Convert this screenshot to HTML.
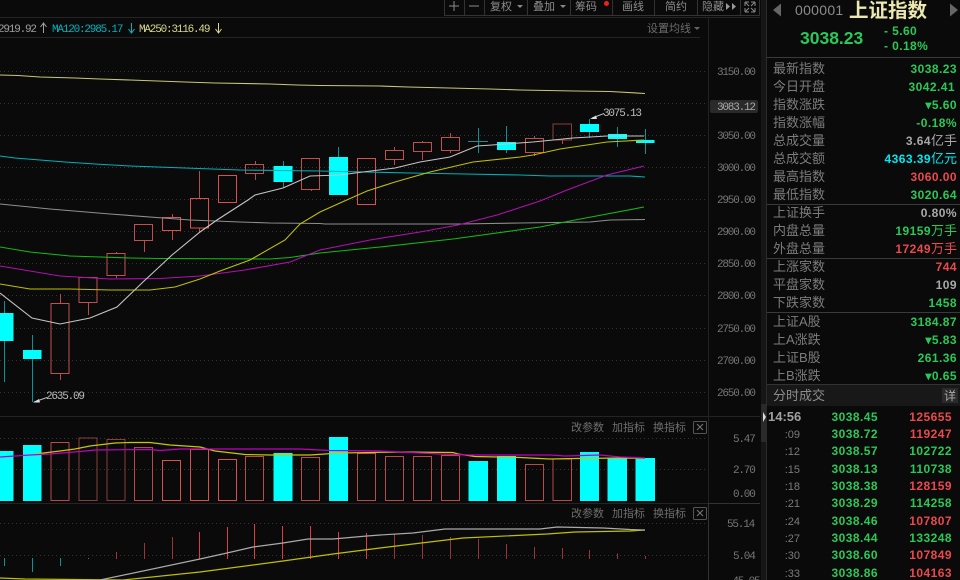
<!DOCTYPE html>
<html><head><meta charset="utf-8"><style>
html,body{margin:0;padding:0;background:#0a0a0a;width:960px;height:580px;overflow:hidden}
svg{display:block}
text{font-family:"Liberation Sans","Noto Sans CJK SC",sans-serif}
.ax{font-family:"Liberation Mono",monospace;font-size:11px;letter-spacing:-1.2px;fill:#767676}
.l{font-size:13px;fill:#7c7c7c}
.v{font-size:12px;font-weight:bold;text-anchor:end;letter-spacing:.45px}
.u{font-size:13px;font-weight:normal;letter-spacing:0}
.g{fill:#2bc858}.r{fill:#e84a4e}.w{fill:#a8a8a8}.c{fill:#00e8f0}
.t{font-size:11px;fill:#7a7a7a;text-anchor:end}
.tb{font-size:11px;fill:#8c8c8c;text-anchor:middle}
.m{font-family:"Liberation Mono",monospace;font-size:11px;letter-spacing:-1.2px}
.ctl{font-size:11px;fill:#6e6e6e}
</style></head><body>
<svg width="960" height="580" viewBox="0 0 960 580" xmlns="http://www.w3.org/2000/svg">
<rect width="960" height="580" fill="#0a0a0a"/>
<!-- frame lines -->
<path d="M0 17.5H760M0 37.5H700M0 416.5H760M0 503.5H760" stroke="#242424" fill="none"/>
<path d="M708.5 17V580" stroke="#222" fill="none"/>
<rect x="761" y="0" width="5" height="580" fill="#161616"/>
<path d="M766.5 0V580" stroke="#2c2c2c"/>
<path d="M708 503.5H760M708.5 503V580" stroke="#333" fill="none"/>
<!-- grid -->
<path d="M0 71.5H706M0 103.5H706M0 135.5H706M0 167.5H706M0 199.5H706M0 231.5H706M0 263.5H706M0 295.5H706M0 328.5H706M0 360.5H706M0 392.5H706M0 438.5H706M0 469.5H706M0 523.5H706M0 555.5H706" stroke="#333" stroke-dasharray="1 3" fill="none"/>
<!-- toolbar -->
<path d="M444.500 0V15.500H759.500V0M464.500 0V15M484.500 0V15M527.500 0V15M570.500 0V15M612.500 0V15M654.500 0V15M697.500 0V15M740.500 0V15" stroke="#333" fill="none"/>
<path d="M449 6H459M454 1V11M469 6H479" stroke="#8a8a8a" fill="none"/>
<text class="tb" x="501" y="10">复权</text><path d="M517 5h6l-3 3z" fill="#888"/>
<text class="tb" x="544" y="10">叠加</text><path d="M560 5h6l-3 3z" fill="#888"/>
<text class="tb" x="586" y="10">筹码</text><circle cx="606.500" cy="3.500" r="2.500" fill="#ee2020"/>
<text class="tb" x="633" y="10">画线</text>
<text class="tb" x="676" y="10">简约</text>
<text class="tb" x="713" y="10">隐藏</text><path d="M726 3l4 3.500-4 3.500zM732 3l4 3.500-4 3.500z" fill="#999"/>
<path d="M745 2l4 0M745 2l0 4M745 2l4 4M755 2l-4 0M755 2l0 4M755 2l-4 4M745 12l4 0M745 12l0-4M745 12l4-4M755 12l-4 0M755 12l0-4M755 12l-4-4" stroke="#888" fill="none"/>
<!-- MA legend -->
<text class="m" x="-2" y="32" fill="#a0a0a0">2919.92</text>
<path d="M43.500 33V24M40.500 27l3-4 3 4" stroke="#a0a0a0" fill="none"/>
<text class="m" x="52" y="32" fill="#00b4c0">MA120:2985.17</text>
<path d="M131.500 23V32M128.500 29l3 4 3-4" stroke="#00b4c0" fill="none"/>
<text class="m" x="139" y="32" fill="#d8d890">MA250:3116.49</text>
<path d="M218.500 23V32M215.500 29l3 4 3-4" stroke="#d8d890" fill="none"/>
<text x="647" y="32" font-size="11" fill="#6c6c6c">设置均线</text><path d="M694 27h6l-3 3z" fill="#666"/>
<!-- axis labels -->
<text class="ax" x="717" y="75">3150.00</text>
<rect x="710" y="100" width="48" height="13" rx="2" fill="#2a2a2a"/>
<text class="ax" x="717" y="110" style="fill:#a8a8a8">3083.12</text>
<text class="ax" x="717" y="139">3050.00</text>
<text class="ax" x="717" y="171">3000.00</text>
<text class="ax" x="717" y="203">2950.00</text>
<text class="ax" x="717" y="235">2900.00</text>
<text class="ax" x="717" y="267">2850.00</text>
<text class="ax" x="717" y="299">2800.00</text>
<text class="ax" x="717" y="332">2750.00</text>
<text class="ax" x="717" y="364">2700.00</text>
<text class="ax" x="717" y="396">2650.00</text>
<text class="ax" x="733" y="442">5.47</text>
<text class="ax" x="733" y="473">2.70</text>
<text class="ax" x="733" y="497">0.00</text>
<text class="ax" x="727" y="527">55.14</text>
<text class="ax" x="733" y="559">5.04</text>
<text class="ax" x="727" y="584">-45.05</text>
<!-- candle wicks -->
<path d="M4.500 301V382M32.500 335V402M338.500 147V195M283.500 161V188M478.500 128V153M506.500 126V153M589.500 119V138M617.500 127V147M645.500 129V154" stroke="#0e9094" fill="none"/>
<path d="M468 141.500H488M636 141.500H654" stroke="#0e9094" fill="none"/>
<path d="M60.500 294V303M60.500 373V380M88.500 302V315M116.500 252V254M116.500 275V278M144.500 240V252M172.500 214V218M172.500 230V240M199.500 171V198M199.500 228V232M255.500 161V164M255.500 173V180M311.500 189V191M394.500 147V150M394.500 159V165M422.500 141V143M422.500 151V160M450.500 133V137M450.500 150V153M534.500 136V138M534.500 152V156M562.500 140V144" stroke="#b84a4a" fill="none"/>
<!-- cyan candle bodies -->
<path d="M0 313H13.500V341H0ZM23 350H41.500V359H23ZM273.500 166H292.500V182H273.500ZM329 157H348V195H329ZM497 142H516V150H497ZM580 124H599V132H580ZM608 134H627V139H608ZM636 140H654.500V143H636Z" fill="#00ffff"/>
<!-- red candle bodies -->
<g fill="none" stroke="#c05050">
<rect x="51" y="303.500" width="18" height="70"/>
<rect x="79" y="277.500" width="18" height="25" />
<rect x="107" y="253.500" width="18" height="22"/>
<rect x="134.500" y="224.500" width="18" height="16"/>
<rect x="162.500" y="217.500" width="18" height="13" stroke="#d85050"/>
<rect x="190.500" y="198.500" width="18" height="29.500" stroke="#d85050"/>
<rect x="218.500" y="175.500" width="18" height="27" stroke="#d85050"/>
<rect x="245.500" y="164.500" width="18" height="9" />
<rect x="301.500" y="158.500" width="18" height="31"/>
<rect x="357.500" y="158.500" width="18" height="46" stroke="#d85050"/>
<rect x="385.500" y="150.500" width="18" height="9"/>
<rect x="413.500" y="142.500" width="18" height="9"/>
<rect x="441.500" y="137.500" width="18" height="13"/>
<rect x="525.500" y="138.500" width="18" height="14"/>
<rect x="553" y="124" width="18.500" height="16" stroke="#8a3c3c"/>
</g>
<!-- MAs -->
<g fill="none" stroke-width="1.100">
<polyline stroke="#c8c878" points="0,75 18,75.500 40,77 75,78 100,79 130,80 185,82 215,83 270,84 297,85 320,85.500 380,86 408,87 490,89 520,90 575,91 610,91.500 645,93.500"/>
<polyline stroke="#00b0bc" points="0,156 15,158 40,160 65,162 95,164 130,166 185,168 240,170 320,171 410,173 465,174 520,175 550,176 630,176 645,177"/>
<polyline stroke="#8e8e8e" points="0,204 50,209 110,214 190,220 240,222 270,223 320,223.500 325,224 460,224 520,223 590,222 610,220 645,219.500"/>
<polyline stroke="#14b814" points="0,247 30,252 70,256 130,258 160,258.500 270,259 290,257.500 320,253 380,247 453,239 540,227 575,220 644,207"/>
<polyline stroke="#b010b0" points="0,266 30,271 60,276 110,279 160,278.500 200,276 245,270 290,262 320,250 370,240 420,232 458,225 497,215 540,201 567,190 607,175 644,166"/>
<polyline stroke="#c0c000" points="0,284 30,289 70,289 110,290 150,290 175,287 200,279 220,271 250,260 285,240 300,224 320,212 340,203 367,191 395,182 430,172 473,162 520,157 533,155 560,149 607,142 644,140"/>
<polyline stroke="#c4c4c4" points="0,293 32,318 60,324 90,318 117,307 143,282 172,255 200,232 217,220 248,200 255,195 283,188 310,176 340,175 363,172 395,168 420,162 450,157 477,146 492,145 533,142 573,138 607,136 644,136"/>
</g>
<!-- annotations -->
<path d="M34 402L47 397.500" stroke="#bbb" fill="none"/><path d="M33 402.500l6-3.500 1 3.500z" fill="#ddd"/>
<text class="m" x="46" y="399" fill="#bdbdbd">2635.09</text>
<path d="M592 118L604 113.500" stroke="#bbb" fill="none"/><path d="M590 119l6-3.500 1 3.500z" fill="#ddd"/>
<text class="m" x="603" y="116" fill="#bdbdbd">3075.13</text>
<!-- volume bars -->
<path d="M0 451H13.500V501H0ZM23 445H41.500V501H23ZM273.500 453H292.500V501H273.500ZM329 437H348V501H329ZM468.500 461H488V501H468.500ZM497 456H516V501H497ZM580 452H599V501H580ZM607.500 458H627V501H607.500ZM635.500 458H655V501H635.500Z" fill="#00ffff"/>
<g fill="none" stroke="#b84a4a">
<rect x="51" y="442.500" width="18" height="58"/>
<rect x="79" y="438" width="18" height="62.500" stroke="#8a3c3c"/>
<rect x="107" y="439.500" width="18" height="61" stroke="#8a3c3c"/>
<rect x="134.500" y="447.500" width="18" height="53"/>
<rect x="162.500" y="460.500" width="18" height="40" stroke="#d85050"/>
<rect x="190.500" y="449.500" width="18" height="51" stroke="#d85050"/>
<rect x="218.500" y="459.500" width="18" height="41" stroke="#d85050"/>
<rect x="245.500" y="456.500" width="18" height="44"/>
<rect x="301.500" y="457.500" width="18" height="43"/>
<rect x="357.500" y="453.500" width="18" height="47"/>
<rect x="385.500" y="456.500" width="18" height="44"/>
<rect x="413.500" y="456.500" width="18" height="44"/>
<rect x="441.500" y="455.500" width="18" height="45"/>
<rect x="525.500" y="464.500" width="18" height="36"/>
<rect x="553" y="459" width="18.500" height="41.500"/>
</g>
<g fill="none" stroke-width="1.200">
<polyline stroke="#c8c800" points="35,454 60,451 75,449 90,446 115,443 130,442.500 150,442.500 170,445 200,447 215,451 245,454.500 270,455 310,455 340,453 400,452 453,452.500 458,454 475,456.500 520,457.500 550,459 575,458.500 625,458 645,458.500"/>
<polyline stroke="#c000c0" points="0,457 30,455 50,454 85,451 95,450 150,449.500 160,450.500 180,449 300,449 330,450.500 380,451 440,454 470,455 550,455 565,456 600,455 620,457 645,458"/>
</g>
<!-- macd -->
<path d="M4.500 558V566M32.500 558V572M60.500 558V566M88.500 558V559" stroke="#0e9094" fill="none"/>
<path d="M116.500 552V559M144.500 543V559M172.500 537V559M394.500 534V559M422.500 535V559M450.500 537V559M478.500 539V559M506.500 544V559M534.500 547V559M562.500 548V559M589.500 550V559M617.500 553.500V559M645.500 556V559" stroke="#9c3438" fill="none"/>
<path d="M199.500 532V559M227.500 527V559M254.500 524V559M282.500 526V559M310.500 526V559M338.500 532V559M366.500 533V559" stroke="#e03c40" fill="none"/>
<g fill="none" stroke-width="1.200">
<polyline stroke="#c0c000" points="0,578 25,579 123,580 200,572 283,561 333,554 380,548 413,544 463,538 547,534 575,532 630,531 645,530"/>
<polyline stroke="#aaaaaa" points="100,580 200,559 227,553 253,547 283,543 308,539 333,539 367,536 380,535 413,533 445,529 540,529 557,527 603,528 630,529.500 645,530"/>
</g>
<!-- panel controls -->
<text class="ctl" x="571" y="431">改参数</text><text class="ctl" x="612" y="431">加指标</text><text class="ctl" x="653" y="431">换指标</text>
<rect x="693.500" y="421.500" width="13" height="12" rx="1" fill="none" stroke="#555"/><path d="M697 424l6 6M703 424l-6 6" stroke="#777"/>
<text class="ctl" x="571" y="517">改参数</text><text class="ctl" x="612" y="517">加指标</text><text class="ctl" x="653" y="517">换指标</text>
<rect x="693.500" y="507.500" width="13" height="12" rx="1" fill="none" stroke="#555"/><path d="M697 510l6 6M703 510l-6 6" stroke="#777"/>
<!-- right panel header -->
<path d="M773 10l8-6.500v13z" fill="#666"/><path d="M958 10l-8-6.500v13z" fill="#666"/>
<text x="795" y="15" font-size="14" fill="#8c8c8c" letter-spacing=".3">000001</text>
<text x="849" y="17" font-size="19.500" font-weight="bold" fill="#ece8b0">上证指数</text>
<text x="800" y="44" font-size="17.500" font-weight="bold" fill="#2bc858">3038.23</text>
<text x="884" y="35" font-size="12" font-weight="bold" fill="#2bc858" letter-spacing=".4">- 5.60</text>
<text x="884" y="50" font-size="12" font-weight="bold" fill="#2bc858" letter-spacing=".4">- 0.18%</text>
<path d="M767 57.500H960M767 204.500H960M767 258.500H960M767 312.500H960" stroke="#3a3a3a" fill="none"/>
<!-- rows -->
<text class="l" x="773" y="73">最新指数</text><text class="v g" x="957" y="73">3038.23</text>
<text class="l" x="773" y="91">今日开盘</text><text class="v g" x="955" y="91">3042.41</text>
<text class="l" x="773" y="109">指数涨跌</text><text class="v g" x="957" y="109">▾5.60</text>
<text class="l" x="773" y="127">指数涨幅</text><text class="v g" x="957" y="127">-0.18%</text>
<text class="l" x="773" y="145">总成交量</text><text class="v w" x="957" y="145">3.64<tspan class="u">亿手</tspan></text>
<text class="l" x="773" y="163">总成交额</text><text class="v c" x="957" y="163">4363.39<tspan class="u">亿元</tspan></text>
<text class="l" x="773" y="181">最高指数</text><text class="v r" x="957" y="181">3060.00</text>
<text class="l" x="773" y="199">最低指数</text><text class="v g" x="957" y="199">3020.64</text>
<text class="l" x="773" y="217">上证换手</text><text class="v w" x="957" y="217">0.80%</text>
<text class="l" x="773" y="235">内盘总量</text><text class="v g" x="957" y="235">19159<tspan class="u">万手</tspan></text>
<text class="l" x="773" y="253">外盘总量</text><text class="v r" x="957" y="253">17249<tspan class="u">万手</tspan></text>
<text class="l" x="773" y="271">上涨家数</text><text class="v r" x="957" y="271">744</text>
<text class="l" x="773" y="289">平盘家数</text><text class="v w" x="957" y="289">109</text>
<text class="l" x="773" y="307">下跌家数</text><text class="v g" x="957" y="307">1458</text>
<text class="l" x="773" y="326">上证A股</text><text class="v g" x="957" y="326">3184.87</text>
<text class="l" x="773" y="344">上A涨跌</text><text class="v g" x="957" y="344">▾5.83</text>
<text class="l" x="773" y="362">上证B股</text><text class="v g" x="957" y="362">261.36</text>
<text class="l" x="773" y="380">上B涨跌</text><text class="v g" x="957" y="380">▾0.65</text>
<!-- tick header -->
<rect x="767" y="385" width="193" height="21" fill="#181818"/>
<path d="M767 384.500H960" stroke="#333"/>
<text x="773" y="400" font-size="13" fill="#8c8c8c">分时成交</text>
<rect x="942" y="388" width="16" height="15" fill="#2a2a2a"/>
<text x="944" y="400" font-size="12" fill="#aaa">详</text>
<!-- ticks -->
<rect x="761" y="404" width="6" height="38" fill="#2a2a2a"/>
<path d="M763 412v10l3-5z" fill="#ddd"/>
<text x="768" y="421" font-size="13" font-weight="bold" fill="#a0a0a0">14:56</text>
<text class="v g" x="878" y="421">3038.45</text><text class="v r" x="952" y="421">125655</text>
<text class="t" x="800" y="438">:09</text><text class="v g" x="878" y="438">3038.72</text><text class="v r" x="952" y="438">119247</text>
<text class="t" x="800" y="455">:12</text><text class="v g" x="878" y="455">3038.57</text><text class="v g" x="952" y="455">102722</text>
<text class="t" x="800" y="473">:15</text><text class="v g" x="878" y="473">3038.13</text><text class="v g" x="952" y="473">110738</text>
<text class="t" x="800" y="490">:18</text><text class="v g" x="878" y="490">3038.38</text><text class="v r" x="952" y="490">128159</text>
<text class="t" x="800" y="507">:21</text><text class="v g" x="878" y="507">3038.29</text><text class="v g" x="952" y="507">114258</text>
<text class="t" x="800" y="525">:24</text><text class="v g" x="878" y="525">3038.46</text><text class="v r" x="952" y="525">107807</text>
<text class="t" x="800" y="542">:27</text><text class="v g" x="878" y="542">3038.44</text><text class="v g" x="952" y="542">133248</text>
<text class="t" x="800" y="559">:30</text><text class="v g" x="878" y="559">3038.60</text><text class="v r" x="952" y="559">107849</text>
<text class="t" x="800" y="577">:33</text><text class="v g" x="878" y="577">3038.86</text><text class="v r" x="952" y="577">104163</text>
</svg>
</body></html>
